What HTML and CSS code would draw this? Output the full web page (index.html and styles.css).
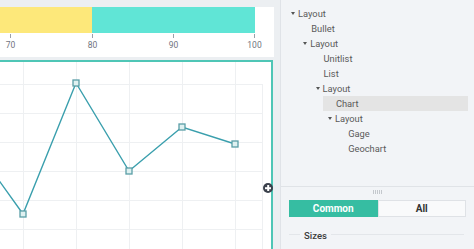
FILE: index.html
```html
<!DOCTYPE html>
<html>
<head>
<meta charset="utf-8">
<link rel="stylesheet" href="styles.css">
</head>
<body>
<div class="app">
  <div class="canvas">
    <div class="card bar-card">
      <svg class="bar-svg" width="274" height="50" viewBox="0 7 274 50">
        <rect x="0" y="7" width="92" height="26" fill="#fde87a"/>
        <rect x="92" y="7" width="163" height="26" fill="#60e5d6"/>
        <g stroke="#9aa0aa" stroke-width="1">
          <line x1="10.5" y1="34" x2="10.5" y2="38"/>
          <line x1="92.5" y1="34" x2="92.5" y2="38"/>
          <line x1="173.5" y1="34" x2="173.5" y2="38"/>
          <line x1="254.5" y1="34" x2="254.5" y2="38"/>
        </g>
        <g class="tick-label" text-anchor="middle">
          <text x="10.5" y="48">70</text>
          <text x="92.5" y="48">80</text>
          <text x="173.5" y="48">90</text>
          <text x="254.5" y="48">100</text>
        </g>
      </svg>
    </div>
    <div class="card chart-card">
      <svg class="line-svg" width="271" height="200" viewBox="0 62 271 200">
        <g stroke="#eef0f2" stroke-width="1">
          <line x1="23.5" y1="62" x2="23.5" y2="262"/>
          <line x1="76.5" y1="62" x2="76.5" y2="262"/>
          <line x1="129.5" y1="62" x2="129.5" y2="262"/>
          <line x1="182.5" y1="62" x2="182.5" y2="262"/>
          <line x1="235.5" y1="62" x2="235.5" y2="262"/>
          <line x1="262.5" y1="84" x2="262.5" y2="262"/>
          <line x1="0" y1="84.5" x2="262" y2="84.5"/>
          <line x1="0" y1="113.5" x2="262" y2="113.5"/>
          <line x1="0" y1="142.5" x2="262" y2="142.5"/>
          <line x1="0" y1="171.5" x2="262" y2="171.5"/>
          <line x1="0" y1="200.5" x2="262" y2="200.5"/>
          <line x1="0" y1="229.5" x2="262" y2="229.5"/>
        </g>
        <polyline fill="none" stroke="#3a9fad" stroke-width="1.4" points="-30,140 23,214 76,83 129,171 182,127 235,144"/>
        <g fill="#dff1f1" stroke="#5a9ea7" stroke-width="1.3">
          <rect x="20" y="211" width="6" height="6"/>
          <rect x="73" y="80" width="6" height="6"/>
          <rect x="126" y="168" width="6" height="6"/>
          <rect x="179" y="124" width="6" height="6"/>
          <rect x="232" y="141" width="6" height="6"/>
        </g>
      </svg>
      <span class="add-btn"></span>
    </div>
  </div>
  <div class="panel">
    <div class="tree">
      <div class="row l0"><span class="caret"></span>Layout</div>
      <div class="row l1">Bullet</div>
      <div class="row l1"><span class="caret"></span>Layout</div>
      <div class="row l2">Unitlist</div>
      <div class="row l2">List</div>
      <div class="row l2"><span class="caret"></span>Layout</div>
      <div class="row l3 selected">Chart</div>
      <div class="row l3"><span class="caret"></span>Layout</div>
      <div class="row l4">Gage</div>
      <div class="row l4">Geochart</div>
    </div>
    <div class="props">
      <div class="handle"><i></i><i></i><i></i><i></i><i></i></div>
      <div class="segmented">
        <div class="seg active">Common</div>
        <div class="seg">All</div>
      </div>
      <div class="section">
        <span class="rule short"></span>
        <span class="section-title">Sizes</span>
        <span class="rule"></span>
      </div>
    </div>
  </div>
</div>
</body>
</html>
```

FILE: styles.css
```css
html, body {
  margin: 0;
  padding: 0;
}
body {
  width: 474px;
  height: 249px;
  overflow: hidden;
  font-family: Roboto, "Liberation Sans", sans-serif;
  background: #f2f4f7;
}
.app {
  display: flex;
  width: 474px;
  height: 249px;
}
.canvas {
  width: 280px;
  flex: none;
  background: #eceff2;
  padding-top: 7px;
  display: flex;
  flex-direction: column;
  gap: 3px;
  overflow: hidden;
  border-right: 1px solid #e0e3e8;
}
.card {
  background: #ffffff;
  flex: none;
}
.bar-card {
  width: 274px;
  height: 50px;
}
.bar-svg, .line-svg {
  display: block;
}
.tick-label {
  font-family: Roboto, "Liberation Sans", sans-serif;
  font-size: 8.5px;
  fill: #6f7480;
}
.chart-card {
  width: 271px;
  height: 200px;
  border: 2px solid #4fc6b6;
  border-left: none;
  position: relative;
}
.add-btn {
  position: absolute;
  left: 263px;
  top: 121px;
  width: 10px;
  height: 10px;
  border-radius: 50%;
  background: #3b414c;
}
.add-btn::before,
.add-btn::after {
  content: "";
  position: absolute;
  background: #ffffff;
  left: 50%;
  top: 50%;
  transform: translate(-50%, -50%);
}
.add-btn::before {
  width: 6px;
  height: 1.6px;
}
.add-btn::after {
  width: 1.6px;
  height: 6px;
}
.panel {
  flex: 1;
  background: #f2f4f7;
  display: flex;
  flex-direction: column;
}
.tree {
  height: 186px;
  flex: none;
  padding: 6px 6px 0 5px;
  box-sizing: border-box;
}
.row {
  height: 15px;
  line-height: 15px;
  font-size: 9.3px;
  color: #5a5a5a;
  padding-left: 13px;
  display: flex;
  align-items: center;
}
.l1 { margin-left: 12.3px; }
.l2 { margin-left: 24.6px; }
.l3 { margin-left: 36.9px; }
.l4 { margin-left: 49.2px; }
.selected {
  background: #e4e4e4;
}
.caret {
  width: 0;
  height: 0;
  border-left: 2.5px solid transparent;
  border-right: 2.5px solid transparent;
  border-top: 3px solid #555;
  margin-left: -8px;
  margin-right: 3px;
}
.props {
  border-top: 1px solid #e0e3e7;
  flex: 1;
  padding: 0 8px;
}
.handle {
  display: flex;
  justify-content: center;
  gap: 1px;
  height: 4px;
  margin-top: 3px;
}
.handle i {
  width: 1px;
  height: 4px;
  background: #c4c8cd;
}
.segmented {
  display: flex;
  margin-top: 6px;
  height: 17px;
}
.seg {
  flex: 1;
  display: flex;
  align-items: center;
  justify-content: center;
  font-size: 10px;
  font-weight: 700;
  color: #333;
  background: #f9fafb;
  border: 1px solid #dfe2e6;
  box-sizing: border-box;
}
.seg.active {
  background: #36bda2;
  border-color: #36bda2;
  color: #ffffff;
}
.section {
  margin-top: 13px;
  height: 12px;
  display: flex;
  align-items: center;
  gap: 4px;
  padding-right: 2px;
}
.rule {
  flex: 1;
  height: 1px;
  background: #e3e6ea;
  margin-top: -3px;
}
.rule.short {
  flex: none;
  width: 11px;
}
.section-title {
  font-size: 9.5px;
  font-weight: 500;
  color: #3c3c3c;
  line-height: 12px;
}
```
